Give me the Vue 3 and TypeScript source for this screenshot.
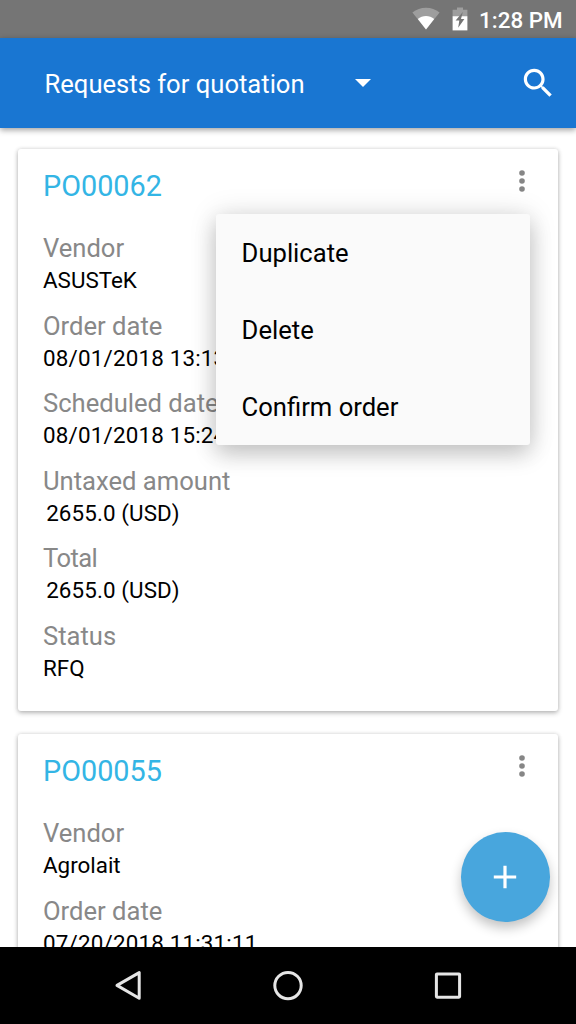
<script setup lang="ts">
interface Field {
  label: string
  value: string
  kind?: 'date' | 'amount'
}

interface Order {
  id: string
  fields: Field[]
}

const orders: Order[] = [
  {
    id: 'PO00062',
    fields: [
      { label: 'Vendor', value: 'ASUSTeK' },
      { label: 'Order date', value: '08/01/2018 13:13:06', kind: 'date' },
      { label: 'Scheduled date', value: '08/01/2018 15:24:12', kind: 'date' },
      { label: 'Untaxed amount', value: '2655.0 (USD)', kind: 'amount' },
      { label: 'Total', value: '2655.0 (USD)', kind: 'amount' },
      { label: 'Status', value: 'RFQ' },
    ],
  },
  {
    id: 'PO00055',
    fields: [
      { label: 'Vendor', value: 'Agrolait' },
      { label: 'Order date', value: '07/20/2018 11:31:11', kind: 'date' },
    ],
  },
]

const actions: string[] = ['Duplicate', 'Delete', 'Confirm order']
</script>

<template>
  <div class="screen">
    <div class="status">
      <svg class="wifi" width="28" height="24" viewBox="0 0 28 24">
        <path d="M0.4 5.6C8-1 20-1 27.6 5.6L14 22.6Z" fill="#fff" fill-opacity=".3" />
        <path d="M5.8 12C10.4 8 17.6 8 22.2 12L14 22.6Z" fill="#fff" />
      </svg>
      <svg class="battery" width="16" height="24" viewBox="0 0 16 24">
        <path d="M.6 9.2V2.8H5V.4H11V2.8H15.4V9.2Z" fill="#fff" fill-opacity=".3" />
        <path d="M.6 9.2H15.4V23.4H.6Z" fill="#fff" />
        <path d="M10.8 5L3.6 13.4H7.3L6.2 20.8L12.4 12H9Z" fill="#757575" />
      </svg>
      <span class="clock">1:28 PM</span>
    </div>

    <header class="bar">
      <span class="title">Requests for quotation</span>
      <svg class="caret" width="16" height="8" viewBox="0 0 16 8">
        <path d="M0 0H16L8 8Z" fill="#fff" />
      </svg>
      <svg class="search" width="38.4" height="38.4" viewBox="0 0 24 24">
        <path
          fill="#fff"
          d="M15.5 14h-.79l-.28-.27C15.41 12.59 16 11.11 16 9.5 16 5.91 13.09 3 9.5 3S3 5.91 3 9.5 5.91 16 9.5 16c1.61 0 3.09-.59 4.23-1.57l.27.28v.79l5 4.99L20.49 19l-4.99-5zm-6 0C7.01 14 5 11.99 5 9.5S7.01 5 9.5 5 14 7.01 14 9.5 11.99 14 9.5 14z"
        />
      </svg>
    </header>

    <main class="list">
      <article v-for="(order, i) in orders" :key="order.id" class="card">
        <div class="head">
          <h2>{{ order.id }}</h2>
          <svg class="more" width="6" height="22" viewBox="0 0 6 22">
            <circle v-for="cy in [3, 11, 19]" :key="cy" cx="3" :cy="cy" r="2.8" fill="#868686" />
          </svg>
        </div>
        <div v-for="field in order.fields" :key="field.label" class="field">
          <div class="label" :class="{ tight: field.label === 'Total' }">{{ field.label }}</div>
          <div class="value" :class="field.kind">{{ field.value }}</div>
        </div>
        <div v-if="i === 0" class="menu">
          <div v-for="action in actions" :key="action" class="item">{{ action }}</div>
        </div>
      </article>
      <div class="fab">
        <svg width="24" height="24" viewBox="0 0 24 24">
          <path d="M12 .8V23.2M.8 12H23.2" stroke="#fff" stroke-width="3.2" />
        </svg>
      </div>
    </main>

    <nav class="nav">
      <svg width="32" height="32" viewBox="0 0 32 32">
        <path d="M27.2 2.6V28.2L5 15.4Z" />
      </svg>
      <svg width="32" height="32" viewBox="0 0 32 32">
        <circle cx="16" cy="15.6" r="13.2" />
      </svg>
      <svg width="32" height="32" viewBox="0 0 32 32">
        <rect x="4.4" y="4" width="23.2" height="23.2" rx=".6" />
      </svg>
    </nav>
  </div>
</template>

<style>
body {
  margin: 0;
  background: #fff;
}
</style>

<style scoped>
.screen {
  width: 576px;
  height: 1024px;
  overflow: hidden;
  display: flex;
  flex-direction: column;
  background: #fff;
  color: #000;
  font-family: Roboto, sans-serif;
}
.status {
  height: 38.4px;
  flex: none;
  box-sizing: border-box;
  padding-right: 13.4px;
  display: flex;
  align-items: center;
  justify-content: flex-end;
  background: #757575;
  color: #fff;
}
.wifi {
  margin: 0 12px 0 0;
}
.battery {
  margin: 0 11px 1px 0;
}
.clock {
  font-size: 22.4px;
  font-weight: 500;
  line-height: 26px;
  margin-top: 2px;
}
.bar {
  height: 89.6px;
  flex: none;
  z-index: 1;
  box-sizing: border-box;
  padding: 0 18.8px 0 44.5px;
  display: flex;
  align-items: center;
  background: #1976d2;
  color: #fff;
  box-shadow: 0 2px 6px rgba(0, 0, 0, 0.38);
}
.title {
  width: 310px;
  font-size: 25.6px;
  line-height: 30px;
  padding-top: 2px;
}
.search {
  margin-left: auto;
}
.list {
  position: relative;
  flex: 1;
  min-height: 0;
  overflow: hidden;
  padding: 21px 17.6px 0;
}
.card {
  position: relative;
  height: 562.4px;
  box-sizing: border-box;
  margin-bottom: 22.6px;
  padding: 20px 26px 0 25.4px;
  border-radius: 3px;
  background: #fff;
  box-shadow: 0 2px 5px rgba(0, 0, 0, 0.26), 0 0 4px rgba(0, 0, 0, 0.12);
}
.head {
  display: flex;
  justify-content: space-between;
  margin-bottom: 30px;
}
.head h2 {
  margin: 0;
  color: #33b5e5;
  font-size: 28.8px;
  font-weight: 400;
  line-height: 34px;
}
.more {
  margin: 1px 7.6px 0 0;
}
.field {
  margin-bottom: 17.6px;
}
.label {
  color: #888;
  font-size: 25.6px;
  line-height: 30px;
}
.tight {
  letter-spacing: -0.6px;
}
.value {
  margin-top: 4px;
  font-size: 22.4px;
  line-height: 26px;
}
.date {
  letter-spacing: 0.18px;
}
.amount {
  padding-left: 3.2px;
  letter-spacing: 0.1px;
}
.menu {
  position: absolute;
  top: 65.4px;
  right: 28.8px;
  width: 313.6px;
  border-radius: 3px;
  background: #fafafa;
  box-shadow: 0 10px 22px rgba(0, 0, 0, 0.18), 0 0 28px rgba(0, 0, 0, 0.13);
}
.item {
  height: 76.8px;
  box-sizing: border-box;
  padding: 1px 0 0 25.6px;
  display: flex;
  align-items: center;
  font-size: 25.6px;
}
.fab {
  position: absolute;
  right: 25.8px;
  bottom: 25.6px;
  width: 89.6px;
  height: 89.6px;
  border-radius: 50%;
  display: flex;
  align-items: center;
  justify-content: center;
  background: #48a6dd;
  box-shadow: 0 6px 12px rgba(0, 0, 0, 0.24);
}
.nav {
  height: 76.8px;
  flex: none;
  display: flex;
  align-items: center;
  justify-content: center;
  gap: 128px;
  background: #000;
}
.nav svg {
  fill: none;
  stroke: #e5e5e5;
  stroke-width: 3;
  stroke-linejoin: round;
}
</style>
